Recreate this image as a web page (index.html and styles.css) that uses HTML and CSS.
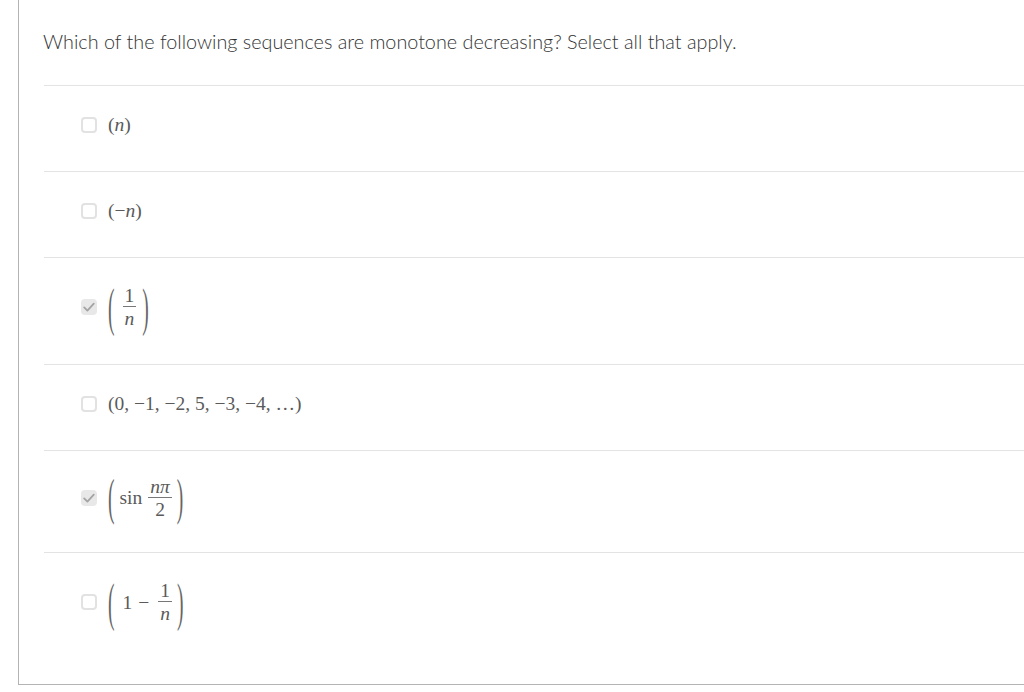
FILE: index.html
```html
<!DOCTYPE html>
<html>
<head>
<meta charset="utf-8">
<link rel="stylesheet" href="styles.css">
</head>
<body>
<div class="panel">
  <p class="question">Which of the following sequences are monotone decreasing? Select all that apply.</p>
  <ul class="options">
    <li class="opt">
      <span class="box"></span>
      <span class="math">(<i>n</i>)</span>
    </li>
    <li class="opt">
      <span class="box"></span>
      <span class="math">(−<i>n</i>)</span>
    </li>
    <li class="opt">
      <span class="box checked"><svg viewBox="0 0 16 16" width="16" height="16"><path d="M3.2 8.4 L6.4 11.6 L12.8 4.6" fill="none" stroke="#a4a4a4" stroke-width="1.8" stroke-linecap="round" stroke-linejoin="round"/></svg></span>
      <span class="math tall">
        <span class="bp">(</span>
        <span class="frac solo"><span class="num">1</span><span class="den"><i>n</i></span></span>
        <span class="bp">)</span>
      </span>
    </li>
    <li class="opt">
      <span class="box"></span>
      <span class="math">(0, −1, −2, 5, −3, −4, …)</span>
    </li>
    <li class="opt">
      <span class="box checked"><svg viewBox="0 0 16 16" width="16" height="16"><path d="M3.2 8.4 L6.4 11.6 L12.8 4.6" fill="none" stroke="#a4a4a4" stroke-width="1.8" stroke-linecap="round" stroke-linejoin="round"/></svg></span>
      <span class="math mid">
        <span class="bp">(</span>
        <span class="fn">sin</span>
        <span class="frac after-fn"><span class="num"><i>nπ</i></span><span class="den">2</span></span>
        <span class="bp">)</span>
      </span>
    </li>
    <li class="opt">
      <span class="box"></span>
      <span class="math tall">
        <span class="bp">(</span>
        <span class="one">1</span><span class="minus">−</span>
        <span class="frac after-op"><span class="num">1</span><span class="den"><i>n</i></span></span>
        <span class="bp">)</span>
      </span>
    </li>
  </ul>
</div>
</body>
</html>
```
FILE: styles.css
```css
html, body {
  margin: 0;
  padding: 0;
  background: #fff;
}

.panel {
  box-sizing: border-box;
  margin-left: 18px;
  height: 685px;
  border-left: 1px solid #b4b4b4;
  border-bottom: 1px solid #b4b4b4;
  padding: 27px 0 0 24px;
  overflow: hidden;
}

.question {
  margin: 0 0 30px 0;
  font-family: Lato, "Liberation Sans", sans-serif;
  font-weight: 300;
  font-size: 19.8px;
  line-height: 28px;
  color: #333;
}

.options {
  list-style: none;
  margin: 0;
  padding: 0 0 0 1px;
}

.opt {
  border-top: 1px solid #e3e3e3;
  padding: 26px 0 34px 37px;
  display: flex;
  align-items: center;
  gap: 11px;
}

.box {
  box-sizing: border-box;
  width: 16px;
  height: 16px;
  border: 2px solid #e2e2e2;
  border-radius: 4px;
  display: flex;
  align-items: center;
  justify-content: center;
  flex: none;
}

.box.checked {
  background: #e8e8e8;
  border-color: #e8e8e8;
}

.box svg {
  display: block;
  flex: none;
}

.math {
  font-family: "Liberation Serif", "DejaVu Serif", serif;
  font-size: 19.5px;
  line-height: 25px;
  height: 25px;
  color: #5a5a5a;
  display: flex;
  align-items: center;
  white-space: pre;
}

.math i {
  font-style: italic;
}

.math.tall {
  height: 46px;
}

.math.mid {
  height: 41px;
}

.bp {
  display: inline-block;
  font-size: 19.5px;
  transform: scaleY(2.75);
  color: #666;
}

.mid .bp {
  transform: scaleY(2.6);
}

.frac {
  display: inline-flex;
  flex-direction: column;
  align-items: center;
  font-size: 19.5px;
  line-height: 19px;
}

.frac.solo {
  margin: 0 6px 0 8px;
}

.frac.after-fn {
  margin: 0 5px 0 6px;
}

.frac.after-op {
  margin: 0 5px 0 0;
}

.frac .num {
  padding: 0 2px 1px;
  border-bottom: 1px solid #777;
}

.frac .den {
  padding: 2px 2px 0;
}

.fn {
  margin-left: 5px;
}

.one {
  margin-left: 8px;
}

.minus {
  margin: 0 9px 0 6px;
}
```
